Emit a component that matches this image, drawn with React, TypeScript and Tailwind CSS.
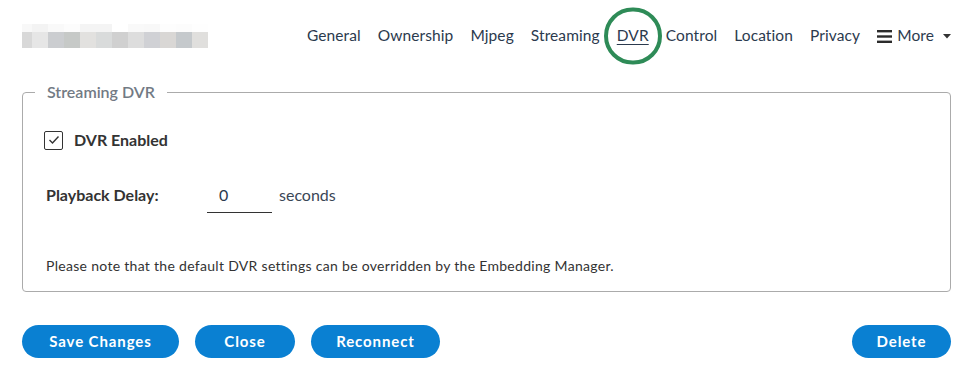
import { useState } from "react";

const navItems = ["General", "Ownership", "Mjpeg", "Streaming", "DVR", "Control", "Location", "Privacy"];

// blurred logo tiles (top row, bottom row)
const topTiles = ["#f8f8f8", "#f3f3f3", "#f9f9f9", "#fcfcfc", "#f4f4f4", "#f4f4f4", "#ffffff", "#f9f9f9", "#f8f8f8", "#fdfdfd", "#fcfcfc", "#fefefe"];
const bottomTiles = ["#d8d8d8", "#e6e6e6", "#cbcdd0", "#c6c9c7", "#e2e1df", "#d9dbdb", "#d0d0d0", "#dddddd", "#d0d1d5", "#d9d7d5", "#c5c9cc", "#e0dfdd"];

function BlurLogo() {
  return (
    <div className="flex flex-col">
      <div className="flex h-[8px]">
        {topTiles.map((c, i) => (
          <div key={i} className={i === 0 ? "w-[10px]" : "w-[16px]"} style={{ backgroundColor: c }} />
        ))}
      </div>
      <div className="flex h-[16px]">
        {bottomTiles.map((c, i) => (
          <div key={i} className={i === 0 ? "w-[10px]" : "w-[16px]"} style={{ backgroundColor: c }} />
        ))}
      </div>
    </div>
  );
}

export default function App() {
  const [enabled, setEnabled] = useState(true);
  const [delay, setDelay] = useState("0");

  return (
    <div className="w-[965px] h-[387px] bg-white text-[#333] font-['Lato',sans-serif]">
      {/* top bar */}
      <div className="flex items-center justify-between h-[72px] pl-[22px] pr-[14px]">
        <BlurLogo />
        <nav className="flex items-center gap-[17px] text-[15.5px] tracking-[0.1px] text-[#2b3a4e]">
          {navItems.map((item) =>
            item === "DVR" ? (
              <span key={item} className="relative underline underline-offset-[3px]">
                {item}
                <span className="absolute left-1/2 top-1/2 -translate-x-1/2 -translate-y-1/2 w-[58px] h-[57px] rounded-full border-[4px] border-[#2e8b57]" />
              </span>
            ) : (
              <span key={item}>{item}</span>
            )
          )}
          <span className="flex items-center">
            <svg width="16" height="13" viewBox="0 0 16 13" className="mr-[4px]">
              <rect x="0" y="0" width="15" height="2.4" fill="#2b2b2b" />
              <rect x="0" y="5.3" width="15" height="2.4" fill="#2b2b2b" />
              <rect x="0" y="10.6" width="15" height="2.4" fill="#2b2b2b" />
            </svg>
            More
            <svg width="8" height="5" viewBox="0 0 8 5" className="ml-[9px]">
              <path d="M0 0 L8 0 L4 4.5 Z" fill="#333" />
            </svg>
          </span>
        </nav>
      </div>

      {/* settings group */}
      <fieldset className="mt-[10px] ml-[22px] mr-[14px] border border-[#ababab] rounded-[4px] pl-[21px] pr-[20px] pb-[16px]">
        <legend className="ml-[-9px] px-[12px] text-[16px] leading-[20px] font-semibold text-[#727a84]">
          Streaming DVR
        </legend>

        <label className="mt-[28px] flex items-center h-[20px] cursor-pointer">
          <span
            onClick={() => setEnabled(!enabled)}
            className="w-[19px] h-[19px] border-[1.5px] border-[#333] rounded-[2px] flex items-center justify-center"
          >
            {enabled && (
              <svg width="12" height="10" viewBox="0 0 12 10">
                <path d="M1.5 5 L4.5 8 L10.5 1.5" fill="none" stroke="#333" strokeWidth="1.4" />
              </svg>
            )}
          </span>
          <span className="ml-[11px] text-[16px] font-bold text-[#333]">DVR Enabled</span>
        </label>

        <div className="mt-[26px] flex items-center h-[37px] pl-[2px]">
          <span className="w-[161px] text-[16px] font-bold text-[#333]">Playback Delay:</span>
          <input
            value={delay}
            onChange={(e) => setDelay(e.target.value)}
            className="w-[65px] h-[37px] border-b border-[#333] pl-[12px] text-[16px] text-[#2b3a4e] outline-none"
          />
          <span className="ml-[7px] text-[16px] text-[#3a4656]">seconds</span>
        </div>

        <p className="mt-[44px] pl-[2px] text-[14px] leading-[18px] tracking-[0.3px] text-[#333]">
          Please note that the default DVR settings can be overridden by the Embedding Manager.
        </p>
      </fieldset>

      {/* actions */}
      <div className="mt-[33px] ml-[22px] mr-[14px] flex items-center">
        <div className="flex gap-[16px]">
          <button className="h-[33px] w-[157px] rounded-full bg-[#0a80d2] text-white text-[15px] font-bold tracking-[0.9px]">
            Save Changes
          </button>
          <button className="h-[33px] w-[100px] rounded-full bg-[#0a80d2] text-white text-[15px] font-bold tracking-[0.9px]">
            Close
          </button>
          <button className="h-[33px] w-[129px] rounded-full bg-[#0a80d2] text-white text-[15px] font-bold tracking-[0.9px]">
            Reconnect
          </button>
        </div>
        <button className="ml-auto h-[33px] w-[99px] rounded-full bg-[#0a80d2] text-white text-[15px] font-bold tracking-[0.9px]">
          Delete
        </button>
      </div>
    </div>
  );
}
